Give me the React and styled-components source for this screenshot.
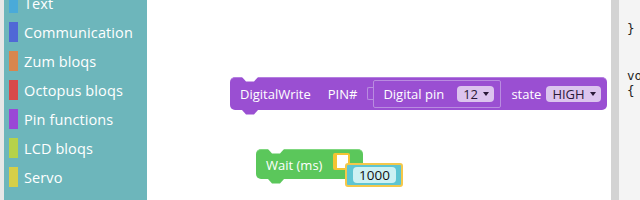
import React from "react";
import styled, { createGlobalStyle } from "styled-components";

const Global = createGlobalStyle`
  html, body { margin: 0; padding: 0; overflow: hidden; }
  body { width: 640px; height: 200px; font-family: "Open Sans", "DejaVu Sans", sans-serif; }
`;

const Shell = styled.div`
  display: flex;
  width: 640px;
  height: 200px;
  overflow: hidden;
`;

const EdgeStrip = styled.div`
  width: 4px;
  background: #e7e7e7;
`;

const Toolbox = styled.div`
  width: 143px;
  background: #6db6bb;
  overflow: hidden;
`;

const CategoryList = styled.ul`
  list-style: none;
  margin: -7px 0 0 0;
  padding: 0;
  display: flex;
  flex-direction: column;
  gap: 9px;
`;

const Category = styled.li`
  display: flex;
  align-items: center;
  gap: 6px;
  height: 20px;
  padding-left: 5px;
  color: #ffffff;
  font-size: 14.5px;
  letter-spacing: 0.1px;
`;

const Swatch = styled.span`
  width: 9px;
  height: 20px;
  background: ${(p) => p.$color};
`;

const Workspace = styled.div`
  position: relative;
  width: 464px;
  background: #ffffff;
`;

const Block = styled.div`
  position: absolute;
  left: ${(p) => p.$x}px;
  top: ${(p) => p.$y}px;
  width: ${(p) => p.$w}px;
  height: ${(p) => p.$h}px;
  box-sizing: border-box;
  display: flex;
  align-items: center;
  padding-left: 10px;
  background: ${(p) => p.$fill};
  border-radius: 5px;
  border-top: 1px solid ${(p) => p.$light};
  color: #fff;
  font-size: 13px;
`;

const Label = styled.span`
  margin-left: ${(p) => p.$ml || 0}px;
  white-space: nowrap;
`;

const Notch = styled.svg`
  position: absolute;
  left: ${(p) => p.$x}px;
  top: ${(p) => p.$y}px;
`;

const InnerInput = styled.div`
  position: relative;
  display: flex;
  align-items: center;
  height: 28px;
  box-sizing: border-box;
  margin-left: ${(p) => p.$ml}px;
  width: ${(p) => p.$w}px;
  padding-left: 9px;
  border: 1px solid #b98ce0;
  border-radius: 2px;
  background: #9a4fd2;

  &::before {
    content: "";
    position: absolute;
    left: -7px;
    top: 6px;
    width: 6px;
    height: 13px;
    box-sizing: border-box;
    border: 1px solid #b98ce0;
    border-right: none;
    border-radius: 2px 0 0 2px;
    background: #9a4fd2;
  }
`;

const Dropdown = styled.span`
  display: inline-flex;
  align-items: center;
  gap: 5px;
  margin-left: ${(p) => p.$ml}px;
  height: 16px;
  padding: 0 5px 0 6px;
  border-radius: 4px;
  background: #dcc4ee;
  color: #2a1a38;
  font-size: 13px;
`;

const Caret = styled.span`
  width: 0;
  height: 0;
  border-left: 3.5px solid transparent;
  border-right: 3.5px solid transparent;
  border-top: 4px solid #2a1a38;
`;

const Slot = styled.div`
  position: absolute;
  left: ${(p) => p.$x}px;
  top: ${(p) => p.$y}px;
  width: 17px;
  height: 17px;
  box-sizing: border-box;
  background: #ffffff;
  border: 2px solid #f4c433;
  border-left-width: 4px;
  border-radius: 2px;
`;

const ValueBlock = styled.div`
  position: absolute;
  left: ${(p) => p.$x}px;
  top: ${(p) => p.$y}px;
  display: flex;
  align-items: center;
  box-sizing: border-box;
  height: 24px;
  padding: 0 5px 0 6px;
  background: #5ec5d2;
  border: 2px solid #f4c84a;
  border-radius: 3px;
`;

const NumberField = styled.span`
  display: inline-flex;
  align-items: center;
  height: 16px;
  padding: 0 6px;
  border-radius: 4px;
  background: #cdf1f3;
  color: #111;
  font-size: 13.5px;
`;

const Divider = styled.div`
  width: 8px;
  background: #d3d3d3;
`;

const CodePanel = styled.pre`
  flex: 1;
  margin: 0;
  padding: 21px 0 0 8px;
  background: #f4f4f4;
  color: #222;
  font-family: "DejaVu Sans Mono", monospace;
  font-size: 12.5px;
  line-height: 15.5px;
  overflow: hidden;
  white-space: pre;
`;

const categories = [
  ["Text", "#4aaad9"],
  ["Communication", "#5068d6"],
  ["Zum bloqs", "#d8864e"],
  ["Octopus bloqs", "#d84a4a"],
  ["Pin functions", "#9a48d6"],
  ["LCD bloqs", "#b6d24a"],
  ["Servo", "#d6cf48"],
];

const TopNotch = ({ x, y }) => (
  <Notch $x={x} $y={y} width="16" height="5" viewBox="0 0 16 5">
    <path d="M0 0 L4 4.5 L12 4.5 L16 0 Z" fill="#ffffff" />
  </Notch>
);

const BottomTab = ({ x, y, fill }) => (
  <Notch $x={x} $y={y} width="16" height="5" viewBox="0 0 16 5">
    <path d="M0 0 L4 4.5 L12 4.5 L16 0 Z" fill={fill} />
  </Notch>
);

export default function App() {
  return (
    <>
      <Global />
      <Shell>
        <EdgeStrip />
        <Toolbox>
          <CategoryList>
            {categories.map(([name, color]) => (
              <Category key={name}>
                <Swatch $color={color} />
                {name}
              </Category>
            ))}
          </CategoryList>
        </Toolbox>
        <Workspace>
          <Block $x={83} $y={77} $w={377} $h={33} $fill="#9a4fd2" $light="#b57ee0">
            <Label>DigitalWrite</Label>
            <Label $ml={17}>PIN#</Label>
            <InnerInput $ml={16} $w={128}>
              <Label>Digital pin</Label>
              <Dropdown $ml={13}>
                12
                <Caret />
              </Dropdown>
            </InnerInput>
            <Label $ml={10}>state</Label>
            <Dropdown $ml={5}>
              HIGH
              <Caret />
            </Dropdown>
            <TopNotch x={12} y={-1} />
            <BottomTab x={12} y={32} fill="#9a4fd2" />
          </Block>

          <Block $x={109} $y={149} $w={107} $h={30} $fill="#5bc75b" $light="#7fd77f">
            <Label>Wait (ms)</Label>
            <TopNotch x={12} y={-1} />
            <BottomTab x={12} y={29} fill="#5bc75b" />
            <Slot $x={77} $y={3} />
          </Block>
          <ValueBlock $x={198} $y={163}>
            <NumberField>1000</NumberField>
          </ValueBlock>
        </Workspace>
        <Divider />
        <CodePanel>{"}\n\n\nvoid loop()\n{"}</CodePanel>
      </Shell>
    </>
  );
}
